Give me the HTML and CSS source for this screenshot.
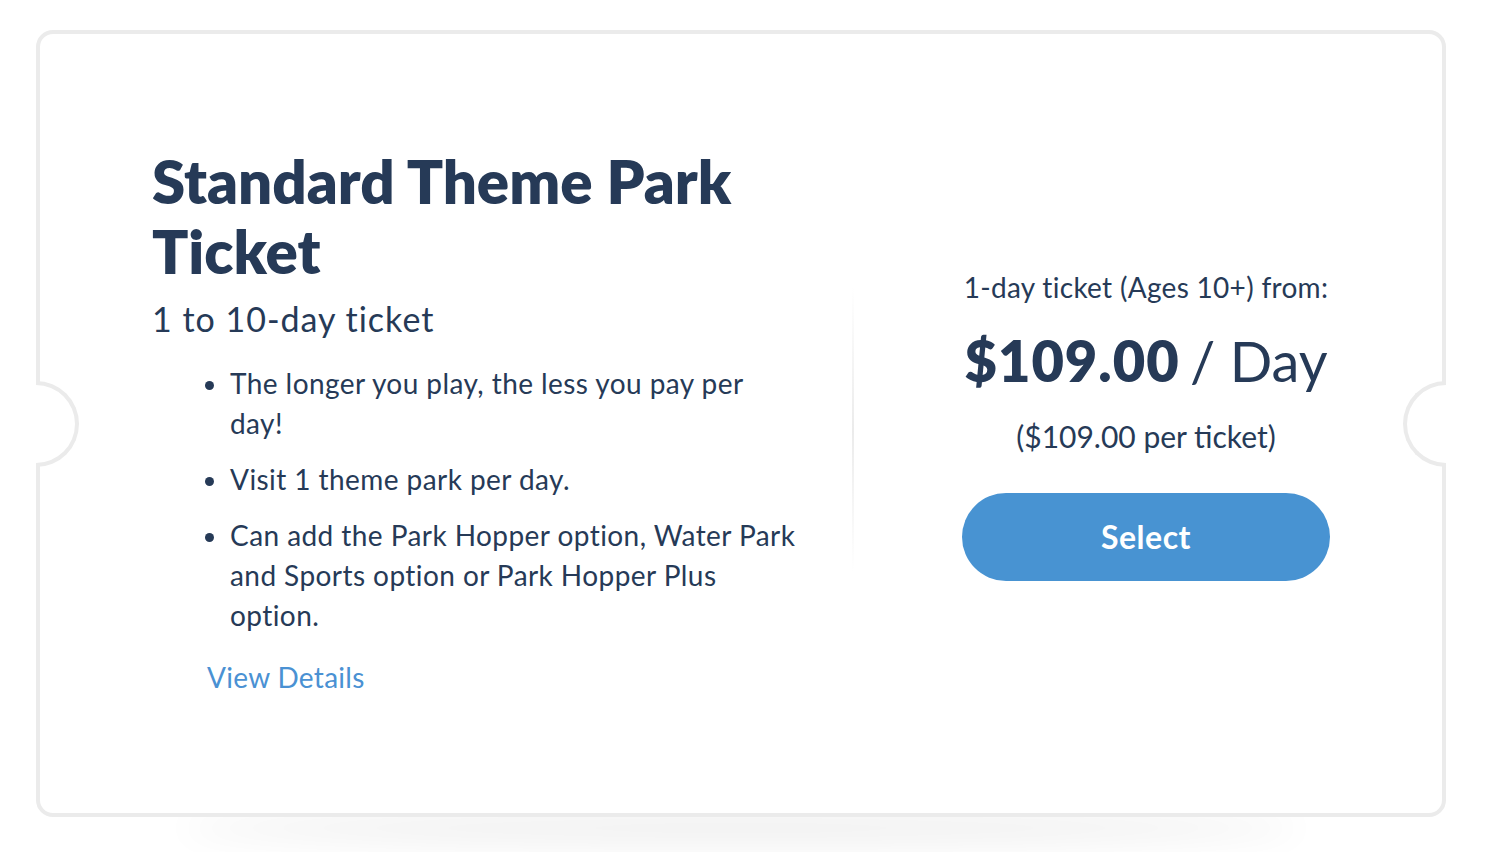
FILE: index.html
```html
<!DOCTYPE html>
<html lang="en">
<head>
<meta charset="utf-8">
<title>Standard Theme Park Ticket</title>
<link rel="stylesheet" href="styles.css">
</head>
<body>
<div class="page">
  <div class="card">
    <span class="notch notch-left"></span>
    <span class="notch notch-right"></span>
    <div class="info">
      <h2 class="title">Standard Theme Park Ticket</h2>
      <p class="subtitle">1 to 10-day ticket</p>
      <ul class="features">
        <li>The longer you play, the less you pay per day!</li>
        <li>Visit 1 theme park per day.</li>
        <li>Can add the Park Hopper option, Water Park and Sports option or Park Hopper Plus option.</li>
      </ul>
      <a class="details" href="#">View Details</a>
    </div>
    <div class="divider"></div>
    <div class="pricing">
      <p class="from">1-day ticket (Ages 10+) from:</p>
      <p class="price"><strong>$109.00</strong> / Day</p>
      <p class="per">($109.00 per ticket)</p>
      <button class="select" type="button">Select</button>
    </div>
  </div>
</div>
</body>
</html>
```
FILE: styles.css
```css
* { box-sizing: border-box; }
html { margin: 0; padding: 0; background: #ffffff; }
body {
  margin: 0;
  padding: 0;
  font-family: Lato, "Open Sans", sans-serif;
  color: #263a57;
  overflow: hidden;
  height: 852px;
}
.page {
  position: relative;
  z-index: 0;
  padding: 30px 0 0 36px;
}
.card {
  position: relative;
  width: 1410px;
  height: 787px;
  border: 4px solid #ebebeb;
  border-radius: 17px;
  background: #ffffff;
  display: flex;
  align-items: center;
  padding-left: 112px;
}
.card::after {
  content: "";
  position: absolute;
  left: 140px;
  right: 140px;
  bottom: 0;
  height: 30px;
  border-radius: 50%;
  box-shadow: 0 30px 34px rgba(0, 0, 0, 0.07);
  z-index: -1;
}
.notch {
  position: absolute;
  top: 50%;
  width: 43px;
  height: 86px;
  margin-top: -43px;
  background: #ffffff;
  border: 4px solid #ebebeb;
}
.notch-left {
  left: -4px;
  border-left: none;
  border-radius: 0 43px 43px 0;
}
.notch-right {
  right: -4px;
  border-right: none;
  border-radius: 43px 0 0 43px;
}
.info {
  width: 660px;
  flex: none;
  margin-bottom: 4px;
}
.title {
  margin: 0;
  font-size: 60px;
  line-height: 70px;
  font-weight: 800;
  width: 600px;
}
.subtitle {
  margin: 11px 0 0;
  font-size: 34px;
  line-height: 44px;
  letter-spacing: 1px;
}
.features {
  margin: 22px 0 0;
  padding-left: 78px;
  width: 650px;
  font-size: 28px;
  line-height: 40px;
  letter-spacing: 0.43px;
}
.features li + li {
  margin-top: 16px;
}
.details {
  display: inline-block;
  margin: 22px 0 0 55px;
  font-size: 28px;
  line-height: 40px;
  letter-spacing: 0.3px;
  color: #4a91d3;
  text-decoration: none;
}
.divider {
  flex: none;
  width: 2px;
  height: 285px;
  margin-left: 40px;
  margin-top: 12px;
  background: linear-gradient(to bottom, rgba(235,235,235,0), #ebebeb 50%, rgba(235,235,235,0));
}
.pricing {
  flex: 1;
  text-align: center;
  padding-right: 4px;
}
.from {
  margin: 0;
  font-size: 28px;
  line-height: 40px;
  letter-spacing: 0.3px;
}
.price {
  margin: 22px 0 0;
  font-size: 56px;
  line-height: 64px;
}
.price strong {
  font-weight: 800;
  letter-spacing: 1px;
  margin-right: -4px;
}
.per {
  margin: 23px 0 0;
  font-size: 30px;
  line-height: 40px;
}
.select {
  display: block;
  margin: 37px auto 0;
  width: 368px;
  height: 88px;
  border: none;
  border-radius: 44px;
  background: #4893d2;
  color: #ffffff;
  font-family: inherit;
  font-size: 32px;
  font-weight: 700;
  letter-spacing: 0.5px;
  cursor: pointer;
}
```
